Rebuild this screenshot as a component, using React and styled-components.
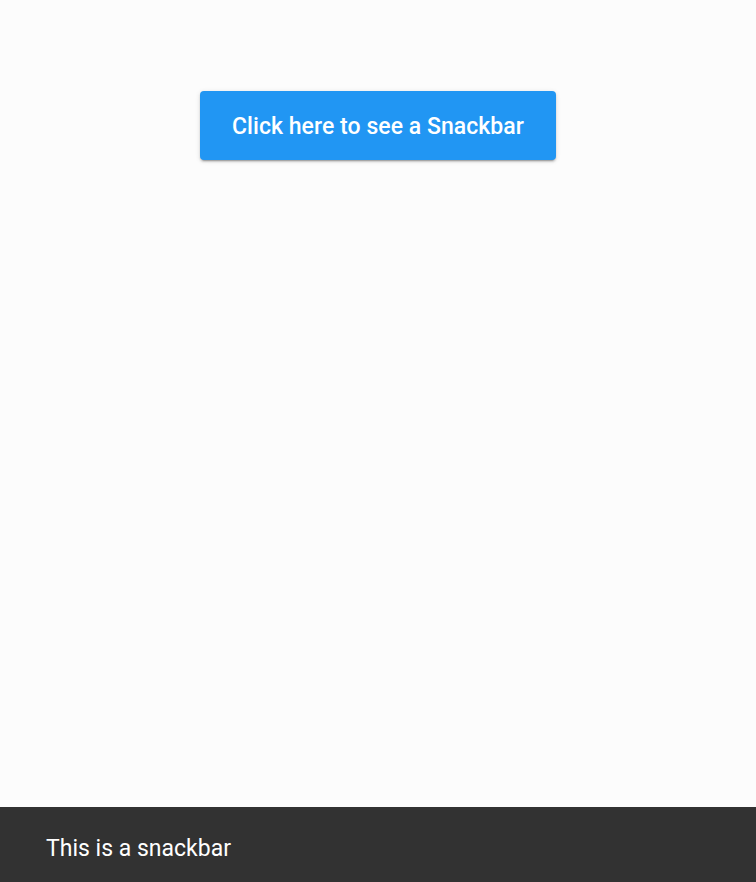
import React from 'react'
import styled, { createGlobalStyle } from 'styled-components'

const GlobalStyle = createGlobalStyle`
    html, body {
        margin: 0;
        padding: 0;
        background: #fcfcfc;
        font-family: Roboto, "Noto Sans", sans-serif;
    }
`

const Page = styled.div`
    min-height: 100vh;
    display: flex;
    flex-direction: column;
    align-items: center;
    padding-top: 91px;
    box-sizing: border-box;
`

const Button = styled.button`
    width: 356px;
    height: 69px;
    padding: 2px 0 0;
    border: none;
    border-radius: 4px;
    background-color: #2196f3;
    color: #fff;
    font-family: Roboto, sans-serif;
    font-weight: 500;
    font-size: 23px;
    letter-spacing: 0.05px;
    cursor: pointer;
    box-shadow: 0 3px 1px -2px rgba(0, 0, 0, 0.2), 0 2px 2px 0 rgba(0, 0, 0, 0.14), 0 1px 5px 0 rgba(0, 0, 0, 0.12);
`

const Snackbar = styled.div`
    position: fixed;
    left: 0;
    right: 0;
    bottom: 0;
    height: 75px;
    background-color: #323232;
    display: flex;
    align-items: center;
    padding: 0 46px;
    box-sizing: border-box;
`

const SnackText = styled.span`
    color: #fff;
    font-family: Roboto, sans-serif;
    font-size: 23px;
    margin-top: 7px;
`

const App = () => (
    <>
        <GlobalStyle />
        <Page>
            <Button>Click here to see a Snackbar</Button>
        </Page>
        <Snackbar>
            <SnackText>This is a snackbar</SnackText>
        </Snackbar>
    </>
)

export default App
